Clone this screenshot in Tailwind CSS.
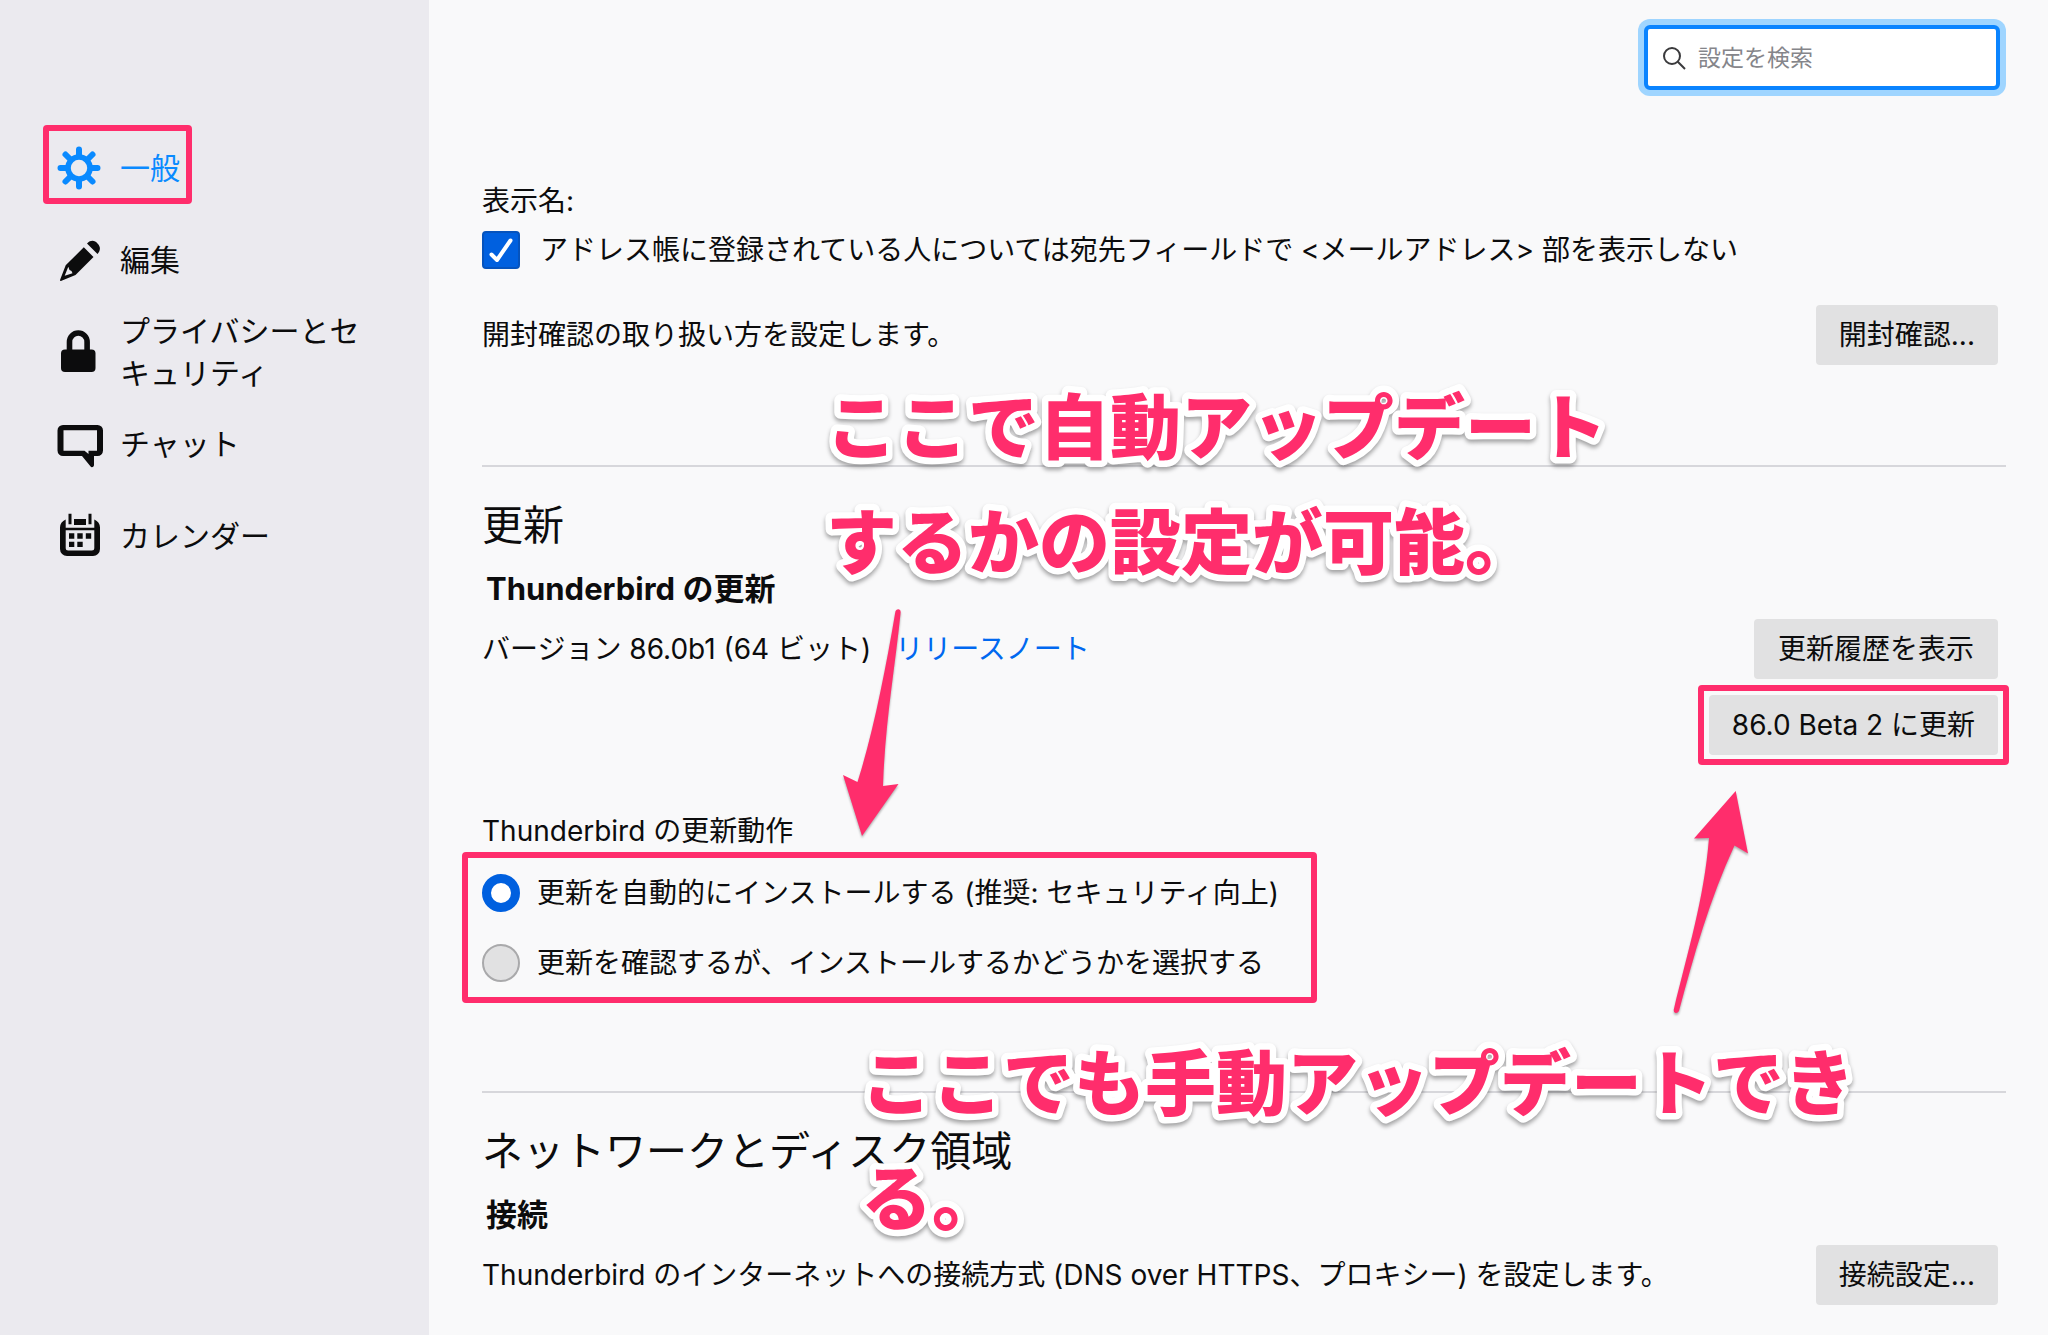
<!DOCTYPE html>
<html lang="ja">
<head>
    <meta charset="UTF-8">
    <meta name="viewport" content="width=device-width, initial-scale=1.0">
    <title>設定</title>
    <script src="https://cdn.jsdelivr.net/npm/@tailwindcss/browser@4"></script>
</head>
<body class="flex min-h-screen bg-[#f9f9fa] text-[#0c0c0d] text-[28px] leading-10 font-[Inter,'Noto_Sans_CJK_JP',sans-serif]">

    <!-- Sidebar -->
    <nav class="w-[429px] shrink-0 bg-[#ebeaef] pt-[122px] pl-14 pr-12 text-[30px] leading-[42px]">
        <a href="#general" class="relative flex items-center gap-[18px] h-[92px] text-[#0a8aff]">
            <svg class="w-[46px] h-[46px] shrink-0" viewBox="0 0 46 46" fill="none" stroke="currentColor">
                <circle cx="23" cy="23" r="11" stroke-width="5.6"/>
                <path stroke-width="6" stroke-linecap="round" d="M23 10V4.500M23 36v5.500M10 23H4.500M36 23h5.500M13.500 13.500l-4-4M32.500 32.500l4 4M13.500 32.500l-4 4M32.500 13.500l4-4"/>
            </svg>
            <span>一般</span>
            <span class="absolute top-[3px] -left-[13px] w-[149px] h-[79px] border-6 border-[#ff2d6c] rounded-sm"></span>
        </a>
        <a href="#compose" class="flex items-center gap-[18px] h-[92px]">
            <svg class="w-[46px] h-[46px] shrink-0" viewBox="0 0 46 46" fill="currentColor">
                <path d="M31 6.500C35 2.500 39 3.500 41.500 6.500C45 10 44.500 13.500 41.500 17z"/>
                <path fill-rule="evenodd" d="M27.800 10.300L37.500 20L19.500 38L5.500 43.800Q3.500 44.500 4.200 42.500L9.700 28.300zM12.300 29.700L8.700 38.700L16.500 36.200Q16 33.500 13.500 33z"/>
            </svg>
            <span>編集</span>
        </a>
        <a href="#privacy" class="flex items-center gap-[18px] h-[92px]">
            <svg class="w-[46px] h-[46px] shrink-0" viewBox="0 0 46 46" fill="currentColor">
                <rect x="5" y="20.500" width="34.500" height="22.500" rx="4"/>
                <path fill="none" stroke="currentColor" stroke-width="5.600" d="M13.500 22V13a8.800 9 0 0 1 17.600 0V22"/>
            </svg>
            <span>プライバシーとセキュリティ</span>
        </a>
        <a href="#chat" class="flex items-center gap-[18px] h-[92px]">
            <svg class="w-[46px] h-[46px] shrink-0 overflow-visible" viewBox="0 0 46 46" fill="currentColor">
                <path fill-rule="evenodd" d="M7 4H41.500a5.500 5.500 0 0 1 5.500 5.500V29.500a5.500 5.500 0 0 1-5.500 5.500H38V44a2 2 0 0 1-3.600 1.300L26 35H7a5.500 5.500 0 0 1-5.500-5.500V9.500A5.500 5.500 0 0 1 7 4zM7.500 9.200V29.800H28.500L32.500 33V29.800H41V9.200z"/>
            </svg>
            <span>チャット</span>
        </a>
        <a href="#calendar" class="flex items-center gap-[18px] h-[92px]">
            <svg class="w-[46px] h-[46px] shrink-0" viewBox="0 0 46 46" fill="currentColor">
                <path d="M9.700 6.500C6 8 4 11 4 14.500V36a7 7 0 0 0 7 7h26a7 7 0 0 0 7-7V14.500C44 11 42 8 38.300 6.500V14.700H9.700zM9.700 17.300H38.300V35a2.500 2.500 0 0 1-2.500 2.500H12.200A2.500 2.500 0 0 1 9.700 35z" fill-rule="evenodd"/>
                <path d="M12.500 .7h3v10.600h-3zM32.500 .7h3v10.600h-3zM18 6h12v6H18zM13 20.300h5.300v5.400H13zM21.300 20.300h5.400v5.400h-5.400zM29.800 20.300h5.400v5.400h-5.400zM13 28.700h5.300v5.400H13zM21.300 28.700h5.400v5.400h-5.400z"/>
            </svg>
            <span>カレンダー</span>
        </a>
    </nav>

    <!-- Preferences pane -->
    <main class="relative flex-1 pt-[25px] pl-[53px] pr-[42px]">
        <div class="flex justify-end pr-[6px]">
            <label class="flex items-center w-[356px] h-[65px] pl-[14px] bg-white border-4 border-[#0a84ff] rounded-md ring-6 ring-[#9fd5ff]">
                <svg class="w-6 h-6 shrink-0" viewBox="0 0 24 24" fill="none" stroke="#3a3a3c" stroke-width="2">
                    <circle cx="10" cy="10" r="8"/>
                    <path d="M15.800 15.800L23 23"/>
                </svg>
                <input type="text" aria-label="設定を検索" placeholder="設定を検索" class="flex-1 min-w-0 ml-3 text-[23px] outline-none placeholder:text-[#85858a]">
            </label>
        </div>

        <section class="pt-[91px] pb-[100px]">
            <p>表示名:</p>
            <div class="flex items-center mt-[9px]">
                <span class="relative w-[38px] h-[38px]">
                    <input id="hide-address" type="checkbox" checked class="block appearance-none w-[38px] h-[38px] rounded bg-[#0060df] border-2 border-[#0553bd]">
                    <svg class="absolute inset-0 pointer-events-none" viewBox="0 0 38 38" fill="none" stroke="#fff" stroke-width="4" stroke-linecap="round" stroke-linejoin="round">
                        <path d="M9.500 23.500L15 29L28.500 9.500"/>
                    </svg>
                </span>
                <label for="hide-address" class="ml-5">アドレス帳に登録されている人については宛先フィールドで &lt;メールアドレス&gt; 部を表示しない</label>
            </div>
            <div class="flex items-center justify-between mt-[35px] pr-2">
                <p>開封確認の取り扱い方を設定します。</p>
                <button type="button" class="h-[60px] px-[23px] bg-[#e1e1e2] rounded">開封確認...</button>
            </div>
        </section>

        <section class="border-t-2 border-[#d7d7db] pt-7 pb-[88px]">
            <h2 class="text-[41px] leading-[60px]">更新</h2>
            <h3 class="mt-3 pl-1 text-[31px] leading-[44px] font-bold">Thunderbird の更新</h3>
            <div class="flex items-start justify-between mt-2 pr-2">
                <p class="leading-[60px]">バージョン 86.0b1 (64 ビット) <a href="#releasenotes" class="ml-4 text-[#0068f0]">リリースノート</a></p>
                <div class="flex flex-col items-end gap-4">
                    <button type="button" class="h-[60px] px-6 bg-[#e1e1e2] rounded">更新履歴を表示</button>
                    <div class="relative">
                        <button type="button" class="h-[60px] px-[23px] bg-[#e1e1e2] rounded">86.0 Beta 2 に更新</button>
                        <span class="absolute -inset-y-[10px] -inset-x-[11px] border-6 border-[#ff2d6c] rounded-sm"></span>
                    </div>
                </div>
            </div>
            <p id="update-label" class="mt-14">Thunderbird の更新動作</p>
            <div role="radiogroup" aria-labelledby="update-label" class="flex flex-col gap-[30px] w-[855px] -ml-5 mt-px pt-[15px] pb-[14px] pl-[14px] border-6 border-[#ff2d6c] rounded-sm">
                <div class="flex items-center">
                    <input id="update-auto" type="radio" name="update" checked class="appearance-none w-[38px] h-[38px] rounded-full bg-[#e1e1e2] border-2 border-[#a9a9ab] checked:bg-white checked:border-[9px] checked:border-[#0060df]">
                    <label for="update-auto" class="ml-[17px]">更新を自動的にインストールする (推奨: セキュリティ向上)</label>
                </div>
                <div class="flex items-center">
                    <input id="update-ask" type="radio" name="update" class="appearance-none w-[38px] h-[38px] rounded-full bg-[#e1e1e2] border-2 border-[#a9a9ab]">
                    <label for="update-ask" class="ml-[17px]">更新を確認するが、インストールするかどうかを選択する</label>
                </div>
            </div>
        </section>

        <section class="border-t-2 border-[#d7d7db] pt-7">
            <h2 class="text-[41px] leading-[60px]">ネットワークとディスク領域</h2>
            <h3 class="mt-3 pl-1 text-[31px] leading-[44px] font-bold">接続</h3>
            <div class="flex items-center justify-between mt-2 pr-2">
                <p>Thunderbird のインターネットへの接続方式 (DNS over HTTPS、プロキシー) を設定します。</p>
                <button type="button" class="h-[60px] px-[23px] bg-[#e1e1e2] rounded">接続設定...</button>
            </div>
        </section>

        <!-- Callouts -->
        <svg class="absolute top-[368px] left-[397px] w-[800px] h-[230px] overflow-visible pointer-events-none text-[71px] font-black font-['Noto_Sans_CJK_JP',sans-serif] [paint-order:stroke] drop-shadow-[0_3px_2px_rgba(0,0,0,0.35)]" fill="#ff2d6c" stroke="#fff" stroke-width="13" stroke-linejoin="round">
            <text x="0" y="85">ここで自動アップデート</text>
            <text x="0" y="200">するかの設定が可能。</text>
        </svg>
        <svg class="absolute top-[1024px] left-[432px] w-[1010px] h-[230px] overflow-visible pointer-events-none text-[71px] font-black font-['Noto_Sans_CJK_JP',sans-serif] [paint-order:stroke] drop-shadow-[0_3px_2px_rgba(0,0,0,0.35)]" fill="#ff2d6c" stroke="#fff" stroke-width="13" stroke-linejoin="round">
            <text x="0" y="85">ここでも手動アップデートでき</text>
            <text x="0" y="200">る。</text>
        </svg>

        <svg class="absolute top-[608px] left-[412px] w-[60px] h-[230px] overflow-visible drop-shadow-[0_2px_1px_rgba(0,0,0,0.3)]" viewBox="0 0 60 230" fill="#ff2d6c">
            <path d="M54.500 3Q55.500 1 57.500 1.200Q59.700 1.500 59.700 4C54 60 44 115 42 178L57.500 176L21 228L2 167L16.500 174C32 125 44 65 54.500 3z"/>
        </svg>
        <svg class="absolute top-[790px] right-[298px] w-[80px] h-[226px] overflow-visible drop-shadow-[0_2px_1px_rgba(0,0,0,0.3)]" viewBox="0 0 80 226" fill="#ff2d6c">
            <path d="M65.700 1L78 63.500L64.500 55.500C40 108 24 165 9 221Q7.500 223.500 5.500 223Q3.500 222.500 3.700 220C18 160 34 110 39 48L24 48.500z"/>
        </svg>
    </main>
</body>
</html>
